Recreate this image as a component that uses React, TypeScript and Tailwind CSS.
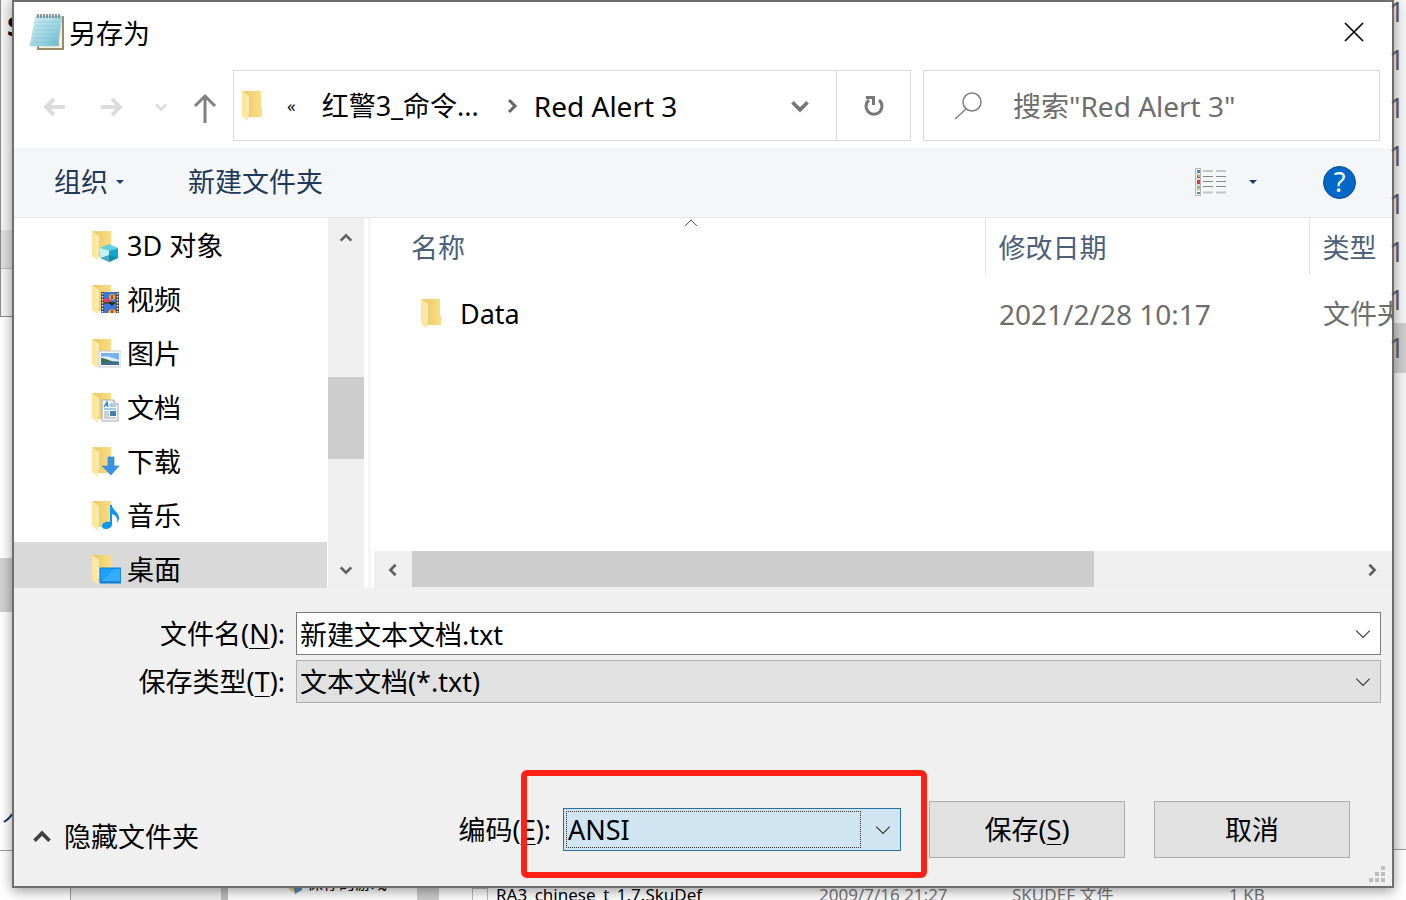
import type { ReactNode } from "react";

const places = [
  { name: "3D 对象", kind: "cube" },
  { name: "视频", kind: "video" },
  { name: "图片", kind: "picture" },
  { name: "文档", kind: "document" },
  { name: "下载", kind: "download" },
  { name: "音乐", kind: "music" },
  { name: "桌面", kind: "desktop", selected: true }
];

const files = [{ name: "Data", date: "2021/2/28 10:17", type: "文件夹" }];

const badges: Record<string, ReactNode> = {
  cube: (
    <>
      <path d="M9 18 18 14l9 4-9 3z" fill="#5fd0dc" />
      <path d="M9 18l9 3v11l-9-4z" fill="#c6f1f3" />
      <path d="M27 18l-9 3v11l9-4z" fill="#12a5d3" />
      <path d="M9 28l9-3 9 3-9 4z" fill="#0a829c" opacity=".65" />
    </>
  ),
  video: (
    <>
      <path d="M10 8h18v21H10z" fill="#4a4a4a" />
      <path d="M13 8h12v10H13zM13 20h12v9H13z" fill="#3f74dc" />
      <path d="M11.500 9v20M26.500 9v20" stroke="#e8e8e8" strokeWidth="1.500" strokeDasharray="1.500 1.500" />
      <path d="M13 15l4-1 3 3v1h-7z" fill="#e0445c" />
      <circle cx="21" cy="13" r="3" fill="#f0b323" />
      <path d="M20 11h2v4h-2z" fill="#b8372a" />
      <path d="M17 18h7l-3 4z" fill="#17301a" />
      <path d="M17 29c0-5 8-5 8 0z" fill="#e9b92f" />
      <path d="M20 26h2v3h-2z" fill="#c53b2a" />
    </>
  ),
  picture: (
    <>
      <path d="M8 13h22v16H8z" fill="#fff" stroke="#c4c8cc" />
      <path d="M10 15h18v12H10z" fill="#76b0f0" />
      <path d="M10 19c6-2 12 1 18 3v1H10z" fill="#dcecf5" />
      <path d="M10 20c5 0 9 4 18 4H10z" fill="#3f6b50" />
      <path d="M10 24h18v3H10z" fill="#3c6e94" />
    </>
  ),
  document: (
    <>
      <path d="M11 8h12l4 4v17H11z" fill="#f4f6f8" stroke="#a9adb1" />
      <path d="M23 8v4h4" fill="#fff" stroke="#999" />
      <path d="M13 15l3-5 1 5M14 13h3" stroke="#2489cc" fill="none" strokeWidth="1.300" />
      <path d="M19 12h3M19 14h6M13 17h12" stroke="#4ba0d7" />
      <path d="M13 20h5M13 22h5M13 24h5M13 26h12" stroke="#a6a9ad" />
      <path d="M19 19h6v5h-6z" fill="#447db0" />
    </>
  ),
  download: <path d="M17 11h6v9h5l-8 9-9-9h6z" fill="#3a94e4" stroke="#2681d3" strokeWidth=".6" />,
  music: (
    <path
      d="M19 5h2c0 5 7 7 7 13 0 2-1 4-2 5 1-5-1-8-5-9v10c0 3-3 5-6 5s-4-1-4-3c0-3 4-5 8-4z"
      fill="#0a98f0"
    />
  ),
  desktop: (
    <>
      <path d="M9 14h21v15H9z" fill="#1ba1fb" stroke="#0c7fd0" />
      <path d="M10 28 24 15h5v13z" fill="#34adff" />
      <path d="M10 28h19" stroke="#0869b4" />
    </>
  )
};

function Folder({ kind = "" }: { kind?: string }) {
  return (
    <svg viewBox="0 0 30 32" className="h-8 w-[30px] shrink-0" aria-hidden="true">
      <defs>
        <linearGradient id="folder-back" x1="0" x2="1">
          <stop offset="0" stopColor="#ebc766" />
          <stop offset="1" stopColor="#fbdf85" />
        </linearGradient>
        <linearGradient id="folder-front" x1="0" x2="1">
          <stop offset="0" stopColor="#ffe394" />
          <stop offset="1" stopColor="#ffecb4" />
        </linearGradient>
      </defs>
      <path d="M2 1h18v16l1 1v9H5z" fill="url(#folder-back)" />
      <path d="M1 1l7 5v18l-1 1v6l-6-5z" fill="url(#folder-front)" />
      {badges[kind]}
    </svg>
  );
}

function Chevron({ path, className, width = 3 }: { path: string; className: string; width?: number }) {
  return (
    <svg viewBox="0 0 16 16" className={className} fill="none" stroke="currentColor" strokeWidth={width} aria-hidden="true">
      <path d={path} />
    </svg>
  );
}

const up = "M2 11l6-6 6 6";
const down = "M2 5l6 6 6-6";
const left = "M11 2L5 8l6 6";
const right = "M5 2l6 6-6 6";

function Caret() {
  return (
    <svg viewBox="0 0 8 4" className="h-1 w-2" aria-hidden="true">
      <path d="M0 0h8L4 4z" fill="#1c3a6b" />
    </svg>
  );
}

function NotepadIcon() {
  return (
    <svg viewBox="0 0 36 38" className="h-[38px] w-9" aria-hidden="true">
      <defs>
        <linearGradient id="pad" x1="0" y1="0" x2="1" y2="1">
          <stop offset="0" stopColor="#d3f1f7" />
          <stop offset=".6" stopColor="#98d2df" />
          <stop offset="1" stopColor="#62b4c9" />
        </linearGradient>
      </defs>
      <path d="M30 3h5v34H8v-3z" fill="#9a8a67" />
      <path d="M30 4h3v31H10v-2h20z" fill="#f5f0df" />
      <path d="M7 3h26l-4 30H1z" fill="url(#pad)" stroke="#a5d3dd" strokeWidth=".7" />
      <path d="M8 9h22M7 13h22M6 17h23M6 21h22M5 25h23M4 29h23" stroke="#83bfce" strokeWidth=".5" />
      <path d="M9 1v4M12 1v4M15 1v4M18 1v4M21 1v4M24 1v4M27 1v4M30 1v4" stroke="#62696c" strokeWidth="1.300" />
    </svg>
  );
}

function ViewIcon() {
  return (
    <svg viewBox="0 0 32 28" className="h-7 w-8" fill="none" aria-hidden="true">
      <path d="M.5.500h5v27h-5zM1 6h4M1 11h4M1 17h4M1 22h4" stroke="#b5b5b5" fill="#fff" />
      <path d="M2 2h3v3H2zM2 24h3v2H2z" fill="#3f8fd0" />
      <path d="M2 7h3v3H2z" fill="#5b6fa0" />
      <path d="M3 7h2v2H3z" fill="#e0b030" />
      <path d="M2 12h3v4H2z" fill="#d2402d" />
      <path d="M2 18h3v3H2z" fill="#9bc06a" />
      <path d="M8 3h10M21 3h10M8 24.500h10M21 24.500h10" stroke="#c5c5c5" strokeWidth="2" />
      <path d="M8 8.500h10M21 8.500h10M8 13.500h10M21 13.500h10M8 18.500h10M21 18.500h10" stroke="#85888b" />
    </svg>
  );
}

function Backdrop() {
  return (
    <div className="absolute inset-0 overflow-hidden bg-white" aria-hidden="true">
      <div className="absolute top-0 left-0 h-[317px] w-4 border-b border-l border-[#8a8a8a] bg-[#f4f4f4]">
        <div className="mt-[230px] h-[39px] border-b border-[#bdbdbd] bg-[#e0e0e0]" />
      </div>
      <span className="absolute top-2 left-[7px] text-[27px] leading-9 font-bold">S</span>
      <div className="absolute top-[558px] left-0 h-[54px] w-4 bg-[#d0d0d0]" />
      <svg viewBox="0 0 10 10" className="absolute top-[813px] left-[3px] size-[10px]" fill="none">
        <path d="M1 9c3-2 6-4 8-8" stroke="#1c3a6b" strokeWidth="2" />
      </svg>
      <div className="absolute top-[850px] left-0 h-px w-4 bg-[#9a9a9a]" />
      <div className="absolute top-0 right-0 h-[850px] w-4 border-b border-[#9a9a9a] bg-[#f4f4f4]">
        <div className="mt-[323px] h-[50px] bg-[#cdcdcd]" />
      </div>
      <div className="absolute right-0 bottom-0 left-0 h-[49px] bg-white">
        <div className="absolute top-0 left-0 h-full w-[71px] border-r border-[#9a9a9a]" />
        <div className="absolute top-0 left-[71px] h-full w-[157px] bg-[#f0f0f0]" />
        <div className="absolute top-0 left-[221px] h-full w-[7px] bg-[#bdbdbd]" />
        <div className="absolute top-0 left-[417px] h-full w-[22px] bg-[#cdcdcd]" />
        <div className="absolute top-[37px] left-[472px] h-full w-4 border border-[#bbb]" />
        <svg viewBox="0 0 18 12" className="absolute top-[31px] left-[286px] h-3 w-[18px]">
          <path d="M1 5l5 5 4-1V2z" fill="#f1d27d" />
          <path d="M7 3h9v5l-7 4z" fill="#5b8db4" />
        </svg>
        <span className="absolute top-5 left-[307px] text-[16px] leading-6">保存的游戏</span>
        <span className="absolute top-8 left-[496px] text-[17px] leading-6">RA3_chinese_t_1.7.SkuDef</span>
        <span className="absolute top-8 left-[819px] text-[17px] leading-6 text-[#777]">2009/7/16 21:27</span>
        <span className="absolute top-8 left-[1012px] text-[17px] leading-6 text-[#777]">SKUDEF 文件</span>
        <span className="absolute top-8 left-[1229px] text-[17px] leading-6 text-[#777]">1 KB</span>
      </div>
    </div>
  );
}

function NavigationBar() {
  return (
    <div className="flex h-[71px] pr-3">
      <div className="flex w-[219px] shrink-0 items-center pt-[2px] pl-7 text-[#dcdcdc]">
        <button aria-label="后退">
          <svg viewBox="0 0 24 20" className="h-5 w-6" fill="none" stroke="currentColor" strokeWidth="4">
            <path d="M23 10H4M12 2l-8 8 8 8" />
          </svg>
        </button>
        <button aria-label="前进" className="ml-[34px]">
          <svg viewBox="0 0 24 20" className="h-5 w-6" fill="none" stroke="currentColor" strokeWidth="4">
            <path d="M1 10h19M12 2l8 8-8 8" />
          </svg>
        </button>
        <button aria-label="最近位置" className="ml-[30px]">
          <Chevron path={down} className="size-[14px]" />
        </button>
        <button aria-label="上移" className="ml-[25px] pt-[2px] text-[#808080]">
          <svg viewBox="0 0 24 30" className="h-[30px] w-6" fill="none" stroke="currentColor" strokeWidth="3">
            <path d="M12 30V3M2 13L12 3l10 10" />
          </svg>
        </button>
      </div>
      <div className="flex min-w-0 flex-1 border border-[#d9d9d9]">
        <div className="flex min-w-0 flex-1 items-center pl-[7px]">
          <Folder />
          <button className="ml-4 text-[17px] leading-5" aria-label="更多">
            «
          </button>
          <button className="ml-[26px] truncate">红警3_命令...</button>
          <Chevron path={right} className="ml-[25px] size-4 shrink-0 text-[#666]" />
          <button className="ml-[14px] text-[28px] whitespace-nowrap">Red Alert 3</button>
        </div>
        <button className="flex w-[73px] items-center justify-center text-[#777]" aria-label="历史记录">
          <Chevron path={down} className="size-5" />
        </button>
        <button className="flex w-[74px] items-center justify-center border-l border-[#d9d9d9]" aria-label="刷新">
          <svg viewBox="0 0 20 22" className="h-[22px] w-5" fill="none" stroke="#777" strokeWidth="3">
            <path d="M15 5a8 8 0 1 1-10 0" />
            <path d="M2 2.500h7.500V10" />
          </svg>
        </button>
      </div>
      <label className="ml-3 flex w-[457px] items-center border border-[#d9d9d9] pl-[30px]">
        <svg viewBox="0 0 30 30" className="size-[30px] shrink-0" fill="none" stroke="#808080" strokeWidth="1.500">
          <circle cx="18" cy="11" r="9" />
          <path d="M12 18L1 28" />
        </svg>
        <input
          className="ml-[29px] w-full min-w-0 text-[28px] outline-none placeholder:text-[#6d6d6d] placeholder:opacity-100"
          placeholder={'搜索"Red Alert 3"'}
          aria-label="搜索"
        />
      </label>
    </div>
  );
}

function Toolbar() {
  return (
    <div className="mt-[7px] flex h-[70px] items-center border-b border-[#e5e7e9] bg-[#f4f6f8] pr-9 pb-px pl-10 text-[#1e395b]">
      <button className="flex items-center gap-2">
        组织
        <Caret />
      </button>
      <button className="ml-16">新建文件夹</button>
      <button className="ml-auto flex items-center gap-[22px]" aria-label="更改视图">
        <ViewIcon />
        <Caret />
      </button>
      <button
        className="ml-[66px] flex size-[33px] items-center justify-center rounded-full border border-[#0a4a8c] bg-[#0068c9] text-[27px] leading-8 text-white"
        aria-label="帮助"
      >
        ?
      </button>
    </div>
  );
}

function Sidebar() {
  return (
    <nav className="flex w-[350px] shrink-0">
      <ul className="h-[370px] flex-1 overflow-hidden">
        {places.map((place) => (
          <li key={place.name} className={place.selected ? "mr-px bg-[#d9d9d9]" : ""}>
            <button className="flex h-[54px] w-full items-center gap-[6px] pt-[2px] pl-[77px]">
              <Folder kind={place.kind} />
              {place.name}
            </button>
          </li>
        ))}
      </ul>
      <div className="flex w-9 flex-col bg-[#efefef] text-[#5f5f5f]">
        <button className="flex h-10 items-center justify-center" aria-label="向上滚动">
          <Chevron path={up} className="size-[14px]" />
        </button>
        <div className="mt-[119px] h-[82px] bg-[#cdcdcd]" />
        <button className="mt-auto flex h-9 items-center justify-center" aria-label="向下滚动">
          <Chevron path={down} className="size-[14px]" />
        </button>
      </div>
    </nav>
  );
}

function FileList() {
  return (
    <div className="ml-1 flex min-w-0 flex-1 flex-col border-l-[3px] border-[#f5f5f5]">
      <div className="relative flex-1 overflow-hidden">
        <table className="w-full table-fixed text-left whitespace-nowrap">
          <thead className="text-[#4c607a]">
            <tr className="h-[57px]">
              <th className="pt-[2px] pl-10 font-normal">名称</th>
              <th className="w-[324px] border-l border-[#e5e5e5] pt-[2px] pl-[13px] font-normal">修改日期</th>
              <th className="w-[83px] border-l border-[#e5e5e5] pt-[2px] pl-[13px] font-normal">类型</th>
            </tr>
          </thead>
          <tbody>
            {files.map((file) => (
              <tr key={file.name} className="h-[78px] text-[#6d6d6d]">
                <td className="pl-[49px]">
                  <span className="flex items-center gap-[10px] text-black">
                    <Folder />
                    {file.name}
                  </span>
                </td>
                <td className="pl-[14px] text-[28px]">{file.date}</td>
                <td className="pl-[14px]">{file.type}</td>
              </tr>
            ))}
          </tbody>
        </table>
        <Chevron path={up} width={1} className="absolute -top-[3px] left-[312px] size-4 text-[#555]" />
      </div>
      <div className="ml-[3px] flex h-[37px] bg-[#efefef] text-[#5f5f5f]">
        <button className="flex w-[38px] items-center justify-center" aria-label="向左滚动">
          <Chevron path={left} className="size-[14px]" />
        </button>
        <div className="mb-px w-[67%] bg-[#cdcdcd]" />
        <button className="ml-auto flex w-10 items-center justify-center" aria-label="向右滚动">
          <Chevron path={right} className="size-[14px]" />
        </button>
      </div>
    </div>
  );
}

function Footer() {
  return (
    <div className="bg-[#f0f0f0] pt-6 pb-7">
      <div className="grid grid-cols-[271px_1fr] items-center gap-x-[11px] gap-y-[5px] pr-[11px]">
        <label htmlFor="file-name" className="text-right">
          文件名(<u className="decoration-1 underline-offset-4">N</u>):
        </label>
        <div className="relative">
          <input
            id="file-name"
            defaultValue="新建文本文档.txt"
            className="h-[43px] w-full border border-[#7a7a7a] bg-white pb-px pl-[3px] outline-none"
          />
          <Chevron path={down} width={1} className="pointer-events-none absolute top-[13px] right-[9px] size-[18px] text-[#333]" />
        </div>
        <label htmlFor="file-type" className="text-right">
          保存类型(<u className="decoration-1 underline-offset-4">T</u>):
        </label>
        <div className="relative">
          <select id="file-type" className="h-[43px] w-full appearance-none border border-[#adadad] bg-[#e1e1e1] pl-[3px]">
            <option>文本文档(*.txt)</option>
          </select>
          <Chevron path={down} width={1} className="pointer-events-none absolute top-[13px] right-[9px] size-[18px] text-[#333]" />
        </div>
      </div>

      <div className="mt-[98px] flex items-center gap-[29px] pr-[42px] pl-[18px]">
        <button className="mt-[14px] mr-auto flex items-center gap-3">
          <Chevron path={up} className="size-5 text-[#404040]" />
          隐藏文件夹
        </button>
        <div className="-mr-px flex items-center gap-3">
          <label htmlFor="encoding">
            编码(<u className="decoration-1 underline-offset-4">E</u>):
          </label>
          <div className="relative">
            <select
              id="encoding"
              className="block h-[43px] w-[338px] appearance-none border border-[#2670a8] bg-[#d1e4f2] pl-1 outline-none"
            >
              <option>ANSI</option>
            </select>
            <div className="pointer-events-none absolute inset-y-[3px] right-10 left-[3px] border border-dotted border-[#333]" />
            <Chevron path={down} width={1} className="pointer-events-none absolute top-[13px] right-[9px] size-[18px] text-[#333]" />
            <div className="pointer-events-none absolute -top-[38px] -right-[26px] -bottom-[27px] -left-[42px] rounded-md border-6 border-[#ff2115]" />
          </div>
        </div>
        <button className="h-[57px] w-[196px] border border-[#adadad] bg-[#e1e1e1]">
          保存(<u className="decoration-1 underline-offset-4">S</u>)
        </button>
        <button className="h-[57px] w-[196px] border border-[#adadad] bg-[#e1e1e1]">取消</button>
      </div>
    </div>
  );
}

export default function App() {
  return (
    <div className="relative min-h-screen overflow-hidden px-3 pb-3 font-['Noto_Sans','Noto_Sans_CJK_SC',sans-serif] text-[27px] leading-9 text-black">
      <Backdrop />
      <div
        role="dialog"
        aria-labelledby="dialog-title"
        className="relative border-2 border-[#6e6e6e] bg-white shadow-[0_3px_12px_rgba(0,0,0,0.4)]"
      >
        <header className="flex h-[68px] items-start pt-[11px] pr-7 pl-[15px]">
          <NotepadIcon />
          <h1 id="dialog-title" className="ml-1 pt-[3px]">
            另存为
          </h1>
          <button className="mt-[9px] ml-auto" aria-label="关闭">
            <svg viewBox="0 0 20 20" className="size-5" stroke="#000" strokeWidth="1.700">
              <path d="M1 1l18 18M19 1L1 19" />
            </svg>
          </button>
        </header>
        <NavigationBar />
        <Toolbar />
        <div className="flex h-[370px]">
          <Sidebar />
          <FileList />
        </div>
        <Footer />
        <svg viewBox="0 0 16 16" className="absolute right-[7px] bottom-1 size-4" fill="#bdbdbd" aria-hidden="true">
          <path d="M12 0h4v4h-4zM6 6h4v4H6zM12 6h4v4h-4zM0 12h4v4H0zM6 12h4v4H6zM12 12h4v4h-4z" />
        </svg>
      </div>
      <div className="pointer-events-none absolute -top-3 right-0 w-[17px] text-[#555]" aria-hidden="true">
        {[0, 1, 2, 3, 4, 5, 6, 7].map((row) => (
          <div key={row} className="h-12 leading-[48px]">
            1
          </div>
        ))}
      </div>
    </div>
  );
}
